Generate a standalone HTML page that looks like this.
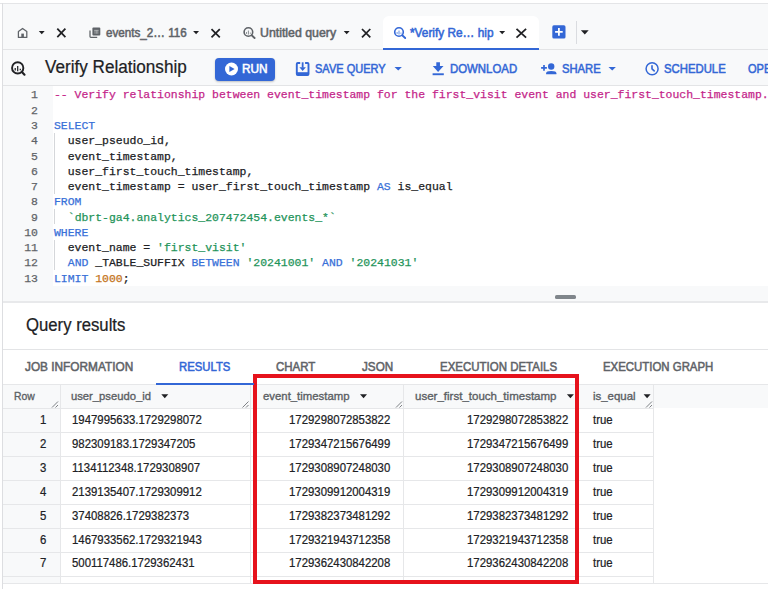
<!DOCTYPE html>
<html lang="en">
<head>
<meta charset="utf-8">
<title>Verify Relationship</title>
<style>
html,body{margin:0;padding:0;}
body{width:768px;height:589px;overflow:hidden;background:#fff;position:relative;
  font-family:"Liberation Sans",sans-serif;color:#202124;}
.abs{position:absolute;}
.t{position:absolute;white-space:pre;line-height:1;transform-origin:0 0;}
.m{-webkit-text-stroke:0.55px currentColor;}
.r{-webkit-text-stroke:0.22px currentColor;}
.h{-webkit-text-stroke:0.35px currentColor;}
svg{position:absolute;overflow:visible;}
/* frame */
#topline{left:0;top:3px;width:768px;height:1px;background:#e4e5e7;}
#leftline{left:2px;top:3px;width:1px;height:586px;background:#dddee1;}
#tabbar{left:3px;top:4px;width:765px;height:45px;background:#f8f9fa;}
#tabbar-b{left:3px;top:49px;width:765px;height:1px;background:#e3e4e6;}
#acttab{left:383px;top:16px;width:156px;height:33px;background:#fff;border-radius:6px 6px 0 0;}
#acttab-b{left:383px;top:48px;width:156px;height:2px;background:#3367d6;}
#tabsep{left:576px;top:21px;width:1px;height:23px;background:#dadce0;}
#toolbar{left:3px;top:50px;width:765px;height:35px;background:#f8f9fa;}
#toolbar-b{left:3px;top:85px;width:765px;height:1px;background:#e3e4e6;}
#gutter{left:3px;top:86px;width:50px;height:200px;background:#f8f9fa;}
#editor{left:53px;top:86px;width:715px;height:200px;background:#fff;}
#gap{left:3px;top:286px;width:765px;height:16px;background:#f8f9fa;}
#gap-b{left:3px;top:301px;width:765px;height:1.5px;background:#e8e9eb;}
#handle{left:555px;top:295.4px;width:21.4px;height:3.2px;background:#80868b;border-radius:1.6px;}
#runbtn{left:215.3px;top:58px;width:59.7px;height:22.9px;background:#3367d6;border-radius:4px;box-shadow:0 1px 2px rgba(60,64,67,.3);}
/* code */
.ln,.cl{position:absolute;white-space:pre;font-family:"Liberation Mono",monospace;font-size:11.5px;line-height:1;transform:scaleX(0.9958);-webkit-text-stroke:0.25px currentColor;}.cl{left:53.80px;transform-origin:0 0;color:#202124;}.ln{left:3px;width:34.9px;text-align:right;transform-origin:100% 0;color:#5f6368;}
.k{color:#3870d8;}.c{color:#c4268a;}.s{color:#1f945a;}.n{color:#c4731a;}
.guide{width:1px;background:#d5d7da;}
/* results */
#res-b1{left:3px;top:348.5px;width:765px;height:1px;background:#e3e4e6;}
#res-ul{left:156px;top:382.6px;width:98px;height:2.4px;background:#3367d6;z-index:2;}
#thead{left:3px;top:385px;width:765px;height:23px;background:#f8f9fa;}
#rowcol{left:3px;top:408px;width:57px;height:175px;background:#f8f9fa;}
.hl{position:absolute;height:1px;background:#e6e7e9;left:3px;}
.vl{position:absolute;width:1px;background:#e6e7e9;}
#redbox{left:253.2px;top:373.6px;width:326.3px;height:210.1px;border:4px solid #e6121c;box-sizing:border-box;}
</style>
</head>
<body>
<div class="abs" id="tabbar"></div>
<div class="abs" id="tabbar-b"></div>
<div class="abs" id="topline"></div>
<div class="abs" id="acttab"></div>
<div class="abs" id="acttab-b"></div>
<div class="abs" id="tabsep"></div>
<div class="abs" id="toolbar"></div>
<div class="abs" id="toolbar-b"></div>
<div class="abs" id="gutter"></div>
<div class="abs" id="editor"></div>
<div class="abs" id="gap"></div>
<div class="abs" id="gap-b"></div>
<div class="abs" id="handle"></div>
<div class="abs" id="runbtn"></div>
<div class="abs" id="res-b1"></div>
<div class="abs" id="res-ul"></div>
<div class="abs" id="thead"></div>
<div class="abs" id="rowcol"></div>
<div class="hl" style="top:384px;width:765px"></div>
<div class="hl" style="top:408.00px;width:651px"></div>
<div class="hl" style="top:431.93px;width:651px"></div>
<div class="hl" style="top:455.86px;width:651px"></div>
<div class="hl" style="top:479.79px;width:651px"></div>
<div class="hl" style="top:503.72px;width:651px"></div>
<div class="hl" style="top:527.65px;width:651px"></div>
<div class="hl" style="top:551.58px;width:651px"></div>
<div class="hl" style="top:575.51px;width:651px"></div>
<div class="hl" style="top:582.5px;width:765px"></div>
<div class="vl" style="left:59.5px;top:385px;height:198px"></div>
<div class="vl" style="left:250.2px;top:385px;height:198px"></div>
<div class="vl" style="left:403.4px;top:385px;height:198px"></div>
<div class="vl" style="left:577.0px;top:385px;height:198px"></div>
<div class="vl" style="left:652.7px;top:385px;height:198px"></div>
<div class="abs" id="leftline"></div>
<svg width="768" height="589" viewBox="0 0 768 589" style="left:0;top:0">
<path d="M18.4 37.4V31.6L22.6 28.5L26.8 31.6V37.4Z" fill="none" stroke="#5f6368" stroke-width="1.25" stroke-linejoin="round"/><rect x="21.3" y="33.6" width="2.6" height="3.8" fill="#5f6368"/>
<path d="M38.80 30.95h5.90l-2.95 3.30z" fill="#202124"/>
<path d="M57.3 28.7L65.4 37.1M65.4 28.7L57.3 37.1" stroke="#202124" stroke-width="1.75" fill="none"/>
<rect x="92.4" y="27.6" width="7.9" height="7.9" rx="1" fill="#5f6368"/><path d="M94.2 30.3H98.6M95 30.3V33.8M96.4 30.3V33.8M97.8 30.3V33.8" stroke="#f8f9fa" stroke-width="0.55" opacity=".8"/><path d="M90 30.6V36.6Q90 37.4 90.8 37.4H97.2" fill="none" stroke="#5f6368" stroke-width="1.25"/>
<path d="M193.15 30.95h5.90l-2.95 3.30z" fill="#202124"/>
<path d="M211.5 29.2L219.8 37.3M219.8 29.2L211.5 37.3" stroke="#202124" stroke-width="1.75" fill="none"/>
<circle cx="248.4" cy="32.0" r="4.3" fill="none" stroke="#5f6368" stroke-width="1.6"/><path d="M251.64 35.24L254.6 38.0" stroke="#5f6368" stroke-width="1.84" stroke-linecap="round"/><path d="M248.4 30.57V34.56M246.51 32.08V33.89M250.36 32.60V33.74" stroke="#80868b" stroke-width="0.94" fill="none"/>
<path d="M343.75 30.95h5.90l-2.95 3.30z" fill="#202124"/>
<path d="M362.0 29.0L370.3 37.3M370.3 29.0L362.0 37.3" stroke="#202124" stroke-width="1.75" fill="none"/>
<circle cx="399.0" cy="32.0" r="4.3" fill="none" stroke="#3367d6" stroke-width="1.6"/><path d="M402.24 35.24L405.2 38.0" stroke="#3367d6" stroke-width="1.84" stroke-linecap="round"/><path d="M399.0 30.57V34.56M397.11 32.08V33.89M400.96 32.60V33.74" stroke="#5585de" stroke-width="0.94" fill="none"/>
<path d="M499.25 30.95h5.90l-2.95 3.30z" fill="#202124"/>
<path d="M516.5 28.8L526.1 37.6M526.1 28.8L516.5 37.6" stroke="#202124" stroke-width="1.8" fill="none"/>
<rect x="552.3" y="25.3" width="13.2" height="13.2" rx="1.6" fill="#3367d6"/><path d="M555.1 31.9H562.7M558.9 28.1V35.7" stroke="#fff" stroke-width="1.8"/>
<path d="M580.90 30.30h7.80l-3.90 4.30z" fill="#202124"/>
<circle cx="17.7" cy="67.9" r="5.65" fill="none" stroke="#202124" stroke-width="1.9"/><path d="M21.90 72.10L24.5 74.7" stroke="#202124" stroke-width="2.18" stroke-linecap="round"/><path d="M17.7 66.02V71.27M15.22 68.00V70.38M20.28 68.69V70.18" stroke="#202124" stroke-width="1.24" fill="none"/>
<circle cx="231.5" cy="69" r="6.5" fill="#fff"/><path d="M229.4 65.9L234.6 69L229.4 72.1Z" fill="#3367d6"/>
<path d="M300.2 63H297.8Q296.8 63 296.8 64V74Q296.8 75 297.8 75H307.5Q308.5 75 308.5 74V64Q308.5 63 307.5 63H305.1" fill="none" stroke="#3367d6" stroke-width="1.9"/><rect x="296.8" y="72.2" width="11.7" height="2.9" fill="#3367d6"/><path d="M302.65 62.3V67.6" stroke="#3367d6" stroke-width="1.8"/><path d="M299.4 67.3H305.9L302.65 70.9Z" fill="#3367d6"/>
<path d="M394.50 66.95h7.40l-3.70 3.60z" fill="#3367d6"/>
<path d="M436.3 62.3H439.95V66.1H443.5L438.1 72.1L432.8 66.1H436.3Z" fill="#3367d6"/><rect x="432.6" y="73.3" width="11.2" height="1.9" fill="#3367d6"/>
<path d="M541.1 67.9H546.9M544 65.1V70.7" stroke="#3367d6" stroke-width="1.7"/><circle cx="551.2" cy="66.5" r="3.2" fill="#3367d6"/><path d="M546.1 74.3V73.2Q546.1 70.9 551.2 70.9Q556.4 70.9 556.4 73.2V74.3Z" fill="#3367d6"/>
<path d="M608.50 66.95h7.40l-3.70 3.60z" fill="#3367d6"/>
<circle cx="652.1" cy="68.75" r="6.0" fill="none" stroke="#3367d6" stroke-width="1.5"/><path d="M652.0 65.7V68.8L654.2 70.9" fill="none" stroke="#3367d6" stroke-width="1.6" stroke-linecap="round" stroke-linejoin="round"/>
<path d="M161.30 394.20h7.00l-3.50 4.00z" fill="#202124"/>
<path d="M360.00 394.20h7.00l-3.50 4.00z" fill="#202124"/>
<path d="M566.90 394.20h7.00l-3.50 4.00z" fill="#202124"/>
<path d="M643.60 394.20h7.00l-3.50 4.00z" fill="#202124"/>
<path d="M52.0 407.5L58.0 401.5M55.5 407.5L58.0 405.0" stroke="#6f7377" stroke-width="0.9" fill="none"/>
<path d="M242.5 407.5L248.5 401.5M246.0 407.5L248.5 405.0" stroke="#6f7377" stroke-width="0.9" fill="none"/>
<path d="M396.0 407.5L402.0 401.5M399.5 407.5L402.0 405.0" stroke="#6f7377" stroke-width="0.9" fill="none"/>
<path d="M646.0 407.5L652.0 401.5M649.5 407.5L652.0 405.0" stroke="#6f7377" stroke-width="0.9" fill="none"/>
</svg>
<span class="t m" style="left:105.70px;top:27.00px;font-size:12.75px;transform:scaleX(0.9131);color:#5f6368;">events_2… 116</span>
<span class="t m" style="left:260.20px;top:27.00px;font-size:12.75px;transform:scaleX(0.9673);color:#5f6368;">Untitled query</span>
<span class="t m" style="left:409.75px;top:27.00px;font-size:12.75px;transform:scaleX(0.9282);color:#3367d6;">*Verify Re… hip</span>
<span class="t r" style="left:45.00px;top:59.00px;font-size:17.68px;transform:scaleX(0.9684);color:#202124;">Verify Relationship</span>
<span class="t m" style="left:242.08px;top:63.00px;font-size:12.83px;transform:scaleX(0.9235);color:#fff;">RUN</span>
<span class="t m" style="left:315.00px;top:63.00px;font-size:12.83px;transform:scaleX(0.8589);color:#3367d6;">SAVE QUERY</span>
<span class="t m" style="left:450.11px;top:63.00px;font-size:12.83px;transform:scaleX(0.8885);color:#3367d6;">DOWNLOAD</span>
<span class="t m" style="left:561.50px;top:63.00px;font-size:12.83px;transform:scaleX(0.8765);color:#3367d6;">SHARE</span>
<span class="t m" style="left:663.50px;top:63.00px;font-size:12.83px;transform:scaleX(0.8838);color:#3367d6;">SCHEDULE</span>
<span class="t m" style="left:748.00px;top:63.00px;font-size:12.83px;transform:scaleX(0.8600);color:#3367d6;">OPEN</span>
<span class="t r" style="left:25.50px;top:317.00px;font-size:17.68px;transform:scaleX(0.9454);color:#202124;">Query results</span>
<span class="t m" style="left:25.00px;top:361.00px;font-size:12.75px;transform:scaleX(0.9276);color:#5f6368;">JOB INFORMATION</span>
<span class="t m" style="left:179.11px;top:361.00px;font-size:12.75px;transform:scaleX(0.8872);color:#3367d6;">RESULTS</span>
<span class="t m" style="left:276.00px;top:361.00px;font-size:12.75px;transform:scaleX(0.8998);color:#5f6368;">CHART</span>
<span class="t m" style="left:362.00px;top:361.00px;font-size:12.75px;transform:scaleX(0.9173);color:#5f6368;">JSON</span>
<span class="t m" style="left:439.60px;top:361.00px;font-size:12.75px;transform:scaleX(0.9000);color:#5f6368;">EXECUTION DETAILS</span>
<span class="t m" style="left:602.85px;top:361.00px;font-size:12.75px;transform:scaleX(0.8951);color:#5f6368;">EXECUTION GRAPH</span>
<div class="ln" style="top:89.00px">1</div>
<div class="cl" style="top:89.00px"><span class="c">-- Verify relationship between event_timestamp for the first_visit event and user_first_touch_timestamp.</span></div>
<div class="ln" style="top:105.00px">2</div>
<div class="ln" style="top:120.00px">3</div>
<div class="cl" style="top:120.00px"><span class="k">SELECT</span></div>
<div class="ln" style="top:135.00px">4</div>
<div class="cl" style="top:135.00px">  user_pseudo_id,</div>
<div class="ln" style="top:151.00px">5</div>
<div class="cl" style="top:151.00px">  event_timestamp,</div>
<div class="ln" style="top:166.00px">6</div>
<div class="cl" style="top:166.00px">  user_first_touch_timestamp,</div>
<div class="ln" style="top:181.00px">7</div>
<div class="cl" style="top:181.00px">  event_timestamp = user_first_touch_timestamp <span class="k">AS</span> is_equal</div>
<div class="ln" style="top:196.00px">8</div>
<div class="cl" style="top:196.00px"><span class="k">FROM</span></div>
<div class="ln" style="top:212.00px">9</div>
<div class="cl" style="top:212.00px">  <span class="s">`dbrt-ga4.analytics_207472454.events_*`</span></div>
<div class="ln" style="top:227.00px">10</div>
<div class="cl" style="top:227.00px"><span class="k">WHERE</span></div>
<div class="ln" style="top:242.00px">11</div>
<div class="cl" style="top:242.00px">  event_name = <span class="s">'first_visit'</span></div>
<div class="ln" style="top:257.00px">12</div>
<div class="cl" style="top:257.00px">  <span class="k">AND</span> _TABLE_SUFFIX <span class="k">BETWEEN</span> <span class="s">'20241001'</span> <span class="k">AND</span> <span class="s">'20241031'</span></div>
<div class="ln" style="top:273.00px">13</div>
<div class="cl" style="top:273.00px"><span class="k">LIMIT</span> <span class="n">1000</span>;</div>
<div class="abs guide" style="left:53.5px;top:132.61px;height:61.08px"></div>
<div class="abs guide" style="left:53.5px;top:208.96px;height:15.27px"></div>
<div class="abs guide" style="left:53.5px;top:239.50px;height:30.54px"></div>
<span class="t h" style="left:14.25px;top:390.00px;font-size:11.70px;transform:scaleX(0.8876);color:#5b5f64;">Row</span>
<span class="t h" style="left:71.25px;top:390.00px;font-size:11.70px;transform:scaleX(0.9616);color:#5b5f64;">user_pseudo_id</span>
<span class="t h" style="left:262.50px;top:390.00px;font-size:11.70px;transform:scaleX(0.9721);color:#5b5f64;">event_timestamp</span>
<span class="t h" style="left:415.00px;top:390.00px;font-size:11.70px;transform:scaleX(0.9857);color:#5b5f64;">user_first_touch_timestamp</span>
<span class="t h" style="left:592.50px;top:390.00px;font-size:11.70px;transform:scaleX(0.9781);color:#5b5f64;">is_equal</span>
<span class="t r" style="left:40.00px;top:414.00px;font-size:12.07px;transform:scaleX(0.9433);color:#202124;">1</span>
<span class="t r" style="left:72.00px;top:414.00px;font-size:12.07px;transform:scaleX(0.9433);color:#202124;">1947995633.1729298072</span>
<span class="t r" style="left:289.37px;top:414.00px;font-size:12.07px;transform:scaleX(0.9433);color:#202124;">1729298072853822</span>
<span class="t r" style="left:466.67px;top:414.00px;font-size:12.07px;transform:scaleX(0.9433);color:#202124;">1729298072853822</span>
<span class="t r" style="left:592.50px;top:414.00px;font-size:12.07px;transform:scaleX(0.9433);color:#202124;">true</span>
<span class="t r" style="left:40.00px;top:438.00px;font-size:12.07px;transform:scaleX(0.9433);color:#202124;">2</span>
<span class="t r" style="left:72.00px;top:438.00px;font-size:12.07px;transform:scaleX(0.9433);color:#202124;">982309183.1729347205</span>
<span class="t r" style="left:289.37px;top:438.00px;font-size:12.07px;transform:scaleX(0.9433);color:#202124;">1729347215676499</span>
<span class="t r" style="left:466.67px;top:438.00px;font-size:12.07px;transform:scaleX(0.9433);color:#202124;">1729347215676499</span>
<span class="t r" style="left:592.50px;top:438.00px;font-size:12.07px;transform:scaleX(0.9433);color:#202124;">true</span>
<span class="t r" style="left:40.00px;top:462.00px;font-size:12.07px;transform:scaleX(0.9433);color:#202124;">3</span>
<span class="t r" style="left:72.00px;top:462.00px;font-size:12.07px;transform:scaleX(0.9433);color:#202124;">1134112348.1729308907</span>
<span class="t r" style="left:289.37px;top:462.00px;font-size:12.07px;transform:scaleX(0.9433);color:#202124;">1729308907248030</span>
<span class="t r" style="left:466.67px;top:462.00px;font-size:12.07px;transform:scaleX(0.9433);color:#202124;">1729308907248030</span>
<span class="t r" style="left:592.50px;top:462.00px;font-size:12.07px;transform:scaleX(0.9433);color:#202124;">true</span>
<span class="t r" style="left:40.00px;top:486.00px;font-size:12.07px;transform:scaleX(0.9433);color:#202124;">4</span>
<span class="t r" style="left:72.00px;top:486.00px;font-size:12.07px;transform:scaleX(0.9433);color:#202124;">2139135407.1729309912</span>
<span class="t r" style="left:289.37px;top:486.00px;font-size:12.07px;transform:scaleX(0.9433);color:#202124;">1729309912004319</span>
<span class="t r" style="left:466.67px;top:486.00px;font-size:12.07px;transform:scaleX(0.9433);color:#202124;">1729309912004319</span>
<span class="t r" style="left:592.50px;top:486.00px;font-size:12.07px;transform:scaleX(0.9433);color:#202124;">true</span>
<span class="t r" style="left:40.00px;top:510.00px;font-size:12.07px;transform:scaleX(0.9433);color:#202124;">5</span>
<span class="t r" style="left:72.00px;top:510.00px;font-size:12.07px;transform:scaleX(0.9433);color:#202124;">37408826.1729382373</span>
<span class="t r" style="left:289.37px;top:510.00px;font-size:12.07px;transform:scaleX(0.9433);color:#202124;">1729382373481292</span>
<span class="t r" style="left:466.67px;top:510.00px;font-size:12.07px;transform:scaleX(0.9433);color:#202124;">1729382373481292</span>
<span class="t r" style="left:592.50px;top:510.00px;font-size:12.07px;transform:scaleX(0.9433);color:#202124;">true</span>
<span class="t r" style="left:40.00px;top:534.00px;font-size:12.07px;transform:scaleX(0.9433);color:#202124;">6</span>
<span class="t r" style="left:72.00px;top:534.00px;font-size:12.07px;transform:scaleX(0.9433);color:#202124;">1467933562.1729321943</span>
<span class="t r" style="left:289.37px;top:534.00px;font-size:12.07px;transform:scaleX(0.9433);color:#202124;">1729321943712358</span>
<span class="t r" style="left:466.67px;top:534.00px;font-size:12.07px;transform:scaleX(0.9433);color:#202124;">1729321943712358</span>
<span class="t r" style="left:592.50px;top:534.00px;font-size:12.07px;transform:scaleX(0.9433);color:#202124;">true</span>
<span class="t r" style="left:40.00px;top:557.00px;font-size:12.07px;transform:scaleX(0.9433);color:#202124;">7</span>
<span class="t r" style="left:72.00px;top:557.00px;font-size:12.07px;transform:scaleX(0.9433);color:#202124;">500117486.1729362431</span>
<span class="t r" style="left:289.37px;top:557.00px;font-size:12.07px;transform:scaleX(0.9433);color:#202124;">1729362430842208</span>
<span class="t r" style="left:466.67px;top:557.00px;font-size:12.07px;transform:scaleX(0.9433);color:#202124;">1729362430842208</span>
<span class="t r" style="left:592.50px;top:557.00px;font-size:12.07px;transform:scaleX(0.9433);color:#202124;">true</span>
<div class="abs" id="redbox"></div>
</body>
</html>
